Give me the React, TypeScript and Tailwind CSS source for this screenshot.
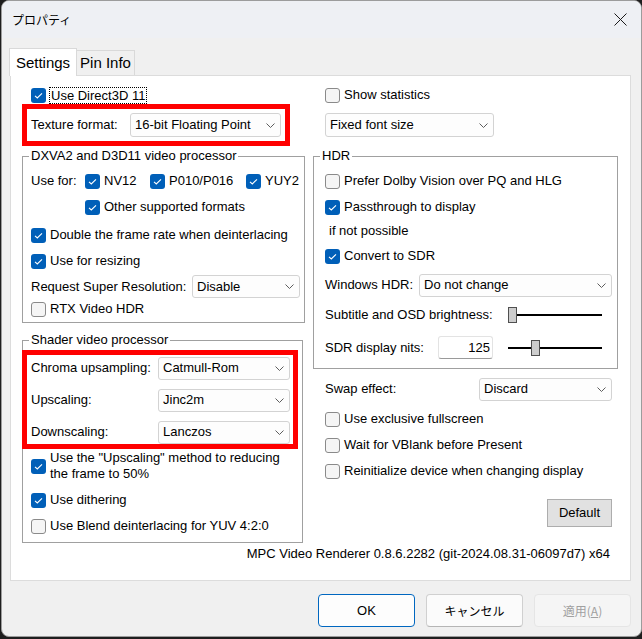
import type { ReactNode } from 'react';

interface CheckProps {
  checked?: boolean
}

function Check({ checked }: CheckProps) {
  if (!checked) {
    return <span className="h-[15px] w-[15px] shrink-0 rounded-[3px] border border-[#8a8a8a] bg-[#f5f5f5]" />
  }
  return (
    <span className="flex h-[15px] w-[15px] shrink-0 items-center justify-center rounded-[3px] bg-[#005fb8]">
      <svg width="15" height="15" viewBox="0 0 15 15">
        <polyline points="4,7.8 6.3,10 11,5.3" fill="none" stroke="#ffffff" strokeWidth="1.1" />
      </svg>
    </span>
  )
}

interface CheckRowProps {
  checked?: boolean
  className: string
  children: ReactNode
}

function CheckRow({ checked, className, children }: CheckRowProps) {
  return (
    <div className={'flex items-center ' + className}>
      <Check checked={checked} />
      <span className="ml-[4px] whitespace-nowrap">{children}</span>
    </div>
  )
}

interface SelectProps {
  value: string
  className: string
}

function Select({ value, className }: SelectProps) {
  return (
    <div className={'flex shrink-0 items-center justify-between rounded-[3px] border border-[#d3d3d3] bg-[#fdfdfd] pl-[4px] pr-[5px] ' + className}>
      <span className="whitespace-nowrap">{value}</span>
      <svg width="9" height="5" viewBox="0 0 9 5">
        <path d="M0.5 0.5 L4.5 4.5 L8.5 0.5" fill="none" stroke="#5d5d5d" strokeWidth="1" />
      </svg>
    </div>
  )
}

interface GroupProps {
  title: string
  className: string
  children: ReactNode
}

function Group({ title, className, children }: GroupProps) {
  return (
    <div className={'relative flex flex-col border border-[#a0a0a0] ' + className}>
      <span className="absolute -top-[9px] left-[6px] bg-white px-[2px] leading-[16px] whitespace-nowrap">{title}</span>
      {children}
    </div>
  )
}

interface SliderProps {
  pos: number
}

function Slider({ pos }: SliderProps) {
  return (
    <div className="relative flex h-[16px] w-[94px] items-center">
      <div className="h-[2px] w-full bg-black" />
      <div className="absolute top-0 h-[16px] w-[9px] border border-[#505050] bg-[#cdcdcd]" style={{ left: pos }} />
    </div>
  )
}

function LeftColumn() {
  return (
    <div className="flex w-[283px] flex-col">
      <div className="ml-[9px] mt-[10px] flex h-[18px] items-center">
        <Check checked />
        <span className="ml-[3px] border border-dotted border-black px-[1px] pt-px leading-[14px]">Use Direct3D 11</span>
      </div>
      <div className="flex h-[42px] w-[268px] items-center border-[5px] border-[#ff0000] pl-[4px]">
        <span className="w-[99px]">Texture format:</span>
        <Select value="16-bit Floating Point" className="h-[24px] w-[151px]" />
      </div>

      <Group title="DXVA2 and D3D11 video processor" className="mt-[10px] w-[283px] pb-[3px] pl-[8px] pt-[11px]">
        <div className="flex h-[26px] items-center">
          <span className="w-[54px]">Use for:</span>
          <CheckRow checked className="w-[65px]">NV12</CheckRow>
          <CheckRow checked className="w-[96px]">P010/P016</CheckRow>
          <CheckRow checked className="">YUY2</CheckRow>
        </div>
        <CheckRow checked className="h-[26px] pl-[54px]">Other supported formats</CheckRow>
        <CheckRow checked className="mt-[2px] h-[26px]">Double the frame rate when deinterlacing</CheckRow>
        <CheckRow checked className="h-[26px]">Use for resizing</CheckRow>
        <div className="flex h-[25px] items-center">
          <span className="w-[161px]">Request Super Resolution:</span>
          <Select value="Disable" className="h-[23px] w-[108px]" />
        </div>
        <CheckRow className="h-[20px]">RTX Video HDR</CheckRow>
      </Group>

      <Group title="Shader video processor" className="mt-[17px] w-[281px] pb-[3px] pl-[8px] pt-[9px]">
        <div className="-ml-[9px] flex h-[99px] w-[276px] flex-col gap-[8px] border-[5px] border-[#ff0000] pl-[4px] pt-[1px]">
          <div className="flex h-[24px] items-center">
            <span className="w-[127px]">Chroma upsampling:</span>
            <Select value="Catmull-Rom" className="h-[23px] w-[132px]" />
          </div>
          <div className="flex h-[24px] items-center">
            <span className="w-[127px]">Upscaling:</span>
            <Select value="Jinc2m" className="h-[23px] w-[132px]" />
          </div>
          <div className="flex h-[24px] items-center">
            <span className="w-[127px]">Downscaling:</span>
            <Select value="Lanczos" className="h-[23px] w-[132px]" />
          </div>
        </div>
        <CheckRow checked className="mt-[1px] h-[32px]">
          Use the "Upscaling" method to reducing<br />the frame to 50%
        </CheckRow>
        <CheckRow checked className="mt-[5px] h-[26px]">Use dithering</CheckRow>
        <CheckRow className="h-[26px]">Use Blend deinterlacing for YUV 4:2:0</CheckRow>
      </Group>
    </div>
  )
}

function RightColumn() {
  return (
    <div className="flex w-[305px] flex-col">
      <CheckRow className="ml-[12px] mt-[10px] h-[18px]">Show statistics</CheckRow>
      <Select value="Fixed font size" className="ml-[12px] mt-[9px] h-[24px] w-[169px]" />

      <Group title="HDR" className="mt-[19px] w-[305px] pb-[3px] pl-[11px] pt-[11px]">
        <CheckRow className="h-[26px]">Prefer Dolby Vision over PQ and HLG</CheckRow>
        <CheckRow checked className="h-[26px]">Passthrough to display</CheckRow>
        <div className="flex h-[22px] items-center pl-[4px]">if not possible</div>
        <CheckRow checked className="h-[28px]">Convert to SDR</CheckRow>
        <div className="flex h-[30px] items-center">
          <span className="w-[94px]">Windows HDR:</span>
          <Select value="Do not change" className="h-[23px] w-[193px]" />
        </div>
        <div className="flex h-[30px] items-center">
          <span className="w-[183px]">Subtitle and OSD brightness:</span>
          <Slider pos={0} />
        </div>
        <div className="flex h-[35px] items-center">
          <span className="w-[113px]">SDR display nits:</span>
          <div className="flex h-[23px] w-[55px] items-center justify-end rounded-[3px] border border-[#e3e3e3] border-b-[#9a9a9a] bg-white pr-[2px]">125</div>
          <div className="ml-[15px]">
            <Slider pos={23} />
          </div>
        </div>
      </Group>

      <div className="ml-[12px] mt-[8px] flex h-[24px] items-center">
        <span className="w-[154px]">Swap effect:</span>
        <Select value="Discard" className="h-[23px] w-[133px]" />
      </div>
      <CheckRow className="ml-[12px] mt-[5px] h-[26px]">Use exclusive fullscreen</CheckRow>
      <CheckRow className="ml-[12px] h-[26px]">Wait for VBlank before Present</CheckRow>
      <CheckRow className="ml-[12px] h-[26px]">Reinitialize device when changing display</CheckRow>
      <button className="mr-[6px] mt-[15px] flex h-[28px] w-[65px] items-center justify-center self-end border border-[#adadad] bg-[#e1e1e1]">
        Default
      </button>
    </div>
  )
}

export default function App() {
  return (
    <div className="h-[639px] w-[642px] bg-[#1e1e1e] pl-[1px] font-['Liberation_Sans',Arial,sans-serif] text-[13px] leading-[16px] text-black">
      <div className="flex h-[637px] w-[641px] flex-col overflow-hidden rounded-[8px] border border-[#9c9c9c] bg-[#f0f0f0]">
        <div className="flex h-[37px] items-center justify-between bg-[#eef0f4]">
          <span className="pl-[10px] font-['Noto_Sans_CJK_JP',sans-serif] text-[12px]">プロパティ</span>
          <div className="flex h-full w-[42px] items-center justify-center">
            <svg width="13" height="13" viewBox="0 0 13 13">
              <path d="M0.5 0.5 L12.5 12.5 M12.5 0.5 L0.5 12.5" stroke="#1a1a1a" strokeWidth="1" />
            </svg>
          </div>
        </div>

        <div className="ml-[7px] mt-[10px] flex h-[28px] items-end">
          <div className="relative z-10 flex h-[28px] w-[68px] items-center justify-center border border-b-0 border-[#d9d9d9] bg-white text-[15px]">
            Settings
          </div>
          <div className="flex h-[26px] w-[58px] items-center justify-center border border-l-0 border-[#d9d9d9] bg-[#f0f0f0] text-[15px]">
            Pin Info
          </div>
        </div>

        <div className="relative -mt-px ml-[8px] flex h-[506px] w-[621px] flex-col border border-[#dcdcdc] bg-white">
          <div className="flex gap-[8px] pl-[11px]">
            <LeftColumn />
            <RightColumn />
          </div>
          <div className="mt-[3px] flex h-[16px] items-center justify-end pr-[20px] whitespace-nowrap">
            MPC Video Renderer 0.8.6.2282 (git-2024.08.31-06097d7) x64
          </div>
        </div>

        <div className="mt-[13px] flex justify-end gap-[11px] pr-[10px]">
          <button className="flex h-[33px] w-[97px] items-center justify-center rounded-[4px] border border-[#0067c0] bg-[#fdfdfd]">
            OK
          </button>
          <button className="flex h-[33px] w-[97px] items-center justify-center rounded-[4px] border border-[#d0d0d0] border-b-[#b5b5b5] bg-[#fbfbfb] font-['Noto_Sans_CJK_JP',sans-serif] text-[12px]">
            キャンセル
          </button>
          <button className="flex h-[33px] w-[97px] items-center justify-center rounded-[4px] border border-[#e5e5e5] bg-[#f5f5f5] font-['Noto_Sans_CJK_JP',sans-serif] text-[12px] text-[#a0a0a0]">
            適用(<span className="underline">A</span>)
          </button>
        </div>
      </div>
    </div>
  )
}
